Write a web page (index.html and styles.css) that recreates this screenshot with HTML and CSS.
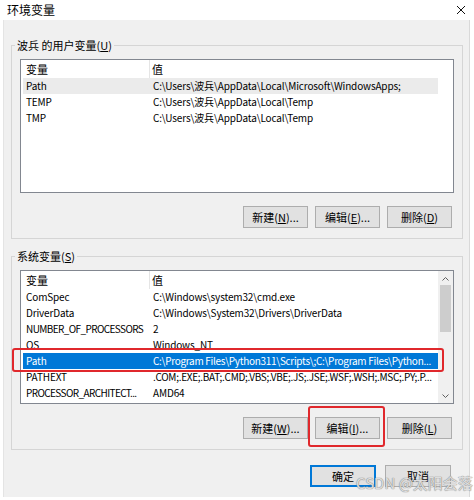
FILE: index.html
```html
<!DOCTYPE html>
<html lang="zh-CN">

<head>
  <meta charset="UTF-8">
  <title>环境变量</title>
  <link rel="stylesheet" href="styles.css">
</head>

<body>
  <div class="window">
    <div class="titlebar">
      <span class="title">环境变量</span>
      <svg class="close" width="10" height="10" viewBox="0 0 10 10">
        <path d="M1 1 L9 9 M9 1 L1 9" stroke="#111" stroke-width="1" fill="none"/>
      </svg>
    </div>

    <div class="dialog">
      <!-- user variables -->
      <fieldset class="group">
        <legend>波兵 的用户变量(<u>U</u>)</legend>
        <div class="listbox">
          <div class="rows">
            <div class="row head"><span class="name">变量</span><span class="value">值</span></div>
            <div class="row picked"><span class="name">Path</span><span class="value">C:\Users\波兵\AppData\Local\Microsoft\WindowsApps;</span></div>
            <div class="row"><span class="name">TEMP</span><span class="value">C:\Users\波兵\AppData\Local\Temp</span></div>
            <div class="row"><span class="name">TMP</span><span class="value">C:\Users\波兵\AppData\Local\Temp</span></div>
          </div>
        </div>
        <div class="buttons">
          <button class="btn">新建(<u>N</u>)...</button>
          <button class="btn">编辑(<u>E</u>)...</button>
          <button class="btn">删除(<u>D</u>)</button>
        </div>
      </fieldset>

      <!-- system variables -->
      <fieldset class="group second">
        <legend>系统变量(<u>S</u>)</legend>
        <div class="listbox">
          <div class="rows">
            <div class="row head"><span class="name">变量</span><span class="value">值</span></div>
            <div class="row"><span class="name">ComSpec</span><span class="value">C:\Windows\system32\cmd.exe</span></div>
            <div class="row"><span class="name">DriverData</span><span class="value">C:\Windows\System32\Drivers\DriverData</span></div>
            <div class="row"><span class="name tight">NUMBER_OF_PROCESSORS</span><span class="value">2</span></div>
            <div class="row"><span class="name">OS</span><span class="value">Windows_NT</span></div>
            <div class="row selected"><span class="name">Path</span><span class="value squeeze">C:\Program Files\Python311\Scripts\;C:\Program Files\Python...</span></div>
            <div class="row"><span class="name">PATHEXT</span><span class="value squeeze">.COM;.EXE;.BAT;.CMD;.VBS;.VBE;.JS;.JSE;.WSF;.WSH;.MSC;.PY;.P...</span></div>
            <div class="row"><span class="name tight">PROCESSOR_ARCHITECT...</span><span class="value">AMD64</span></div>
          </div>
          <div class="scrollbar">
            <svg class="arrow" width="7" height="4" viewBox="0 0 7 4"><path d="M0.5 3.5 L3.5 0.5 L6.5 3.5" stroke="#606060" fill="none"/></svg>
            <div class="thumb"></div>
            <div class="track"></div>
            <svg class="arrow" width="7" height="4" viewBox="0 0 7 4"><path d="M0.5 0.5 L3.5 3.5 L6.5 0.5" stroke="#606060" fill="none"/></svg>
          </div>
        </div>
        <div class="buttons">
          <button class="btn">新建(<u>W</u>)...</button>
          <button class="btn">编辑(<u>I</u>)...</button>
          <button class="btn">删除(<u>L</u>)</button>
        </div>
      </fieldset>

      <div class="dialog-buttons">
        <button class="btn wide default">确定</button>
        <button class="btn wide">取消</button>
      </div>
    </div>

    <!-- annotations drawn over the screenshot -->
    <div class="mark mark-path"></div>
    <div class="mark mark-edit"></div>
    <div class="watermark">CSDN @太阳会落</div>
  </div>
</body>
</html>
```

FILE: styles.css
```css
* {
    box-sizing: border-box;
}

body {
    margin: 0;
    font-family: "Noto Sans CJK SC", "Liberation Sans", sans-serif;
    font-size: 11px;
    color: #000;
    background: #fff;
}

.window {
    position: relative;
    width: 474px;
    height: 500px;
    background: #fff;
    overflow: hidden;
}

.titlebar {
    height: 20px;
    display: flex;
    align-items: center;
    justify-content: space-between;
    padding: 0 8px 1px 7px;
    font-size: 12px;
}

.dialog {
    margin: 0 4px 0 3px;
    height: 477px;
    background: #f0f0f0;
    border-left: 1px solid #e4e4e4;
    border-right: 1px solid #d9d9d9;
    padding: 18px 0 0 7px;
}

/* group boxes */
.group {
    margin: 0;
    width: 452px;
    min-width: 0;
    border: 1px solid #d5d5d5;
    padding: 7px 8px 10px;
}

.group.second {
    margin-top: 10px;
}

.group legend {
    margin-left: -5px;
    padding: 0 2px;
    line-height: 14px;
}

/* list views */
.listbox {
    height: 134px;
    border: 1px solid #828790;
    background: #fff;
    display: flex;
    overflow: hidden;
}

.rows {
    flex: 1;
    padding-left: 2px;
}

.row {
    display: flex;
    width: 415px;
    height: 16px;
    line-height: 16px;
    font-size: 10px;
    letter-spacing: -0.15px;
    white-space: nowrap;
    overflow: hidden;
}

.row .name {
    width: 127px;
    flex: none;
    padding-left: 3px;
    overflow: hidden;
}

.row .name.tight {
    letter-spacing: -0.6px;
}

.row .value {
    flex: 1;
    padding-left: 3px;
    overflow: hidden;
}

.row .value.squeeze {
    letter-spacing: -0.3px;
}

.row.head {
    height: 18px;
    line-height: 18px;
    font-size: 11px;
    letter-spacing: 0;
}

.row.head .name {
    border-right: 1px solid #e5e5e5;
}

.row.head .value {
    padding-left: 2px;
}

.row.picked {
    background: #ebebeb;
}

.row.selected {
    background: #0078d7;
    color: #fff;
}

.scrollbar {
    width: 15px;
    flex: none;
    background: #f0f0f0;
    display: flex;
    flex-direction: column;
    align-items: center;
    padding: 6px 0 5px;
}

.scrollbar .thumb {
    width: 11px;
    height: 47px;
    margin-top: 4px;
    background: #cdcdcd;
}

.scrollbar .track {
    flex: 1;
}

/* buttons */
.buttons {
    display: flex;
    justify-content: flex-end;
    gap: 7px;
    margin-top: 13px;
    padding-right: 2px;
}

.btn {
    width: 65px;
    height: 22px;
    padding: 0;
    font: inherit;
    color: #000;
    background: #e1e1e1;
    border: 1px solid #adadad;
}

.btn.wide {
    width: 66px;
}

.btn.default {
    border-color: #0078d7;
    box-shadow: inset 0 0 0 1px #0078d7;
}

.dialog-buttons {
    display: flex;
    justify-content: flex-end;
    gap: 9px;
    margin-top: 15px;
    padding-right: 18px;
}

/* red marks and watermark */
.mark {
    position: absolute;
    border: 2px solid #e0282c;
    border-radius: 3px;
}

.mark-path {
    left: 12px;
    top: 348px;
    width: 432px;
    height: 24px;
}

.mark-edit {
    left: 308px;
    top: 406px;
    width: 77px;
    height: 41px;
}

.watermark {
    position: absolute;
    left: 356px;
    top: 474px;
    font-size: 15px;
    line-height: 18px;
    white-space: nowrap;
    color: rgba(232, 232, 232, 0.92);
    text-shadow: 0 0 1px #808080, 0 0 1px #808080;
}
```
